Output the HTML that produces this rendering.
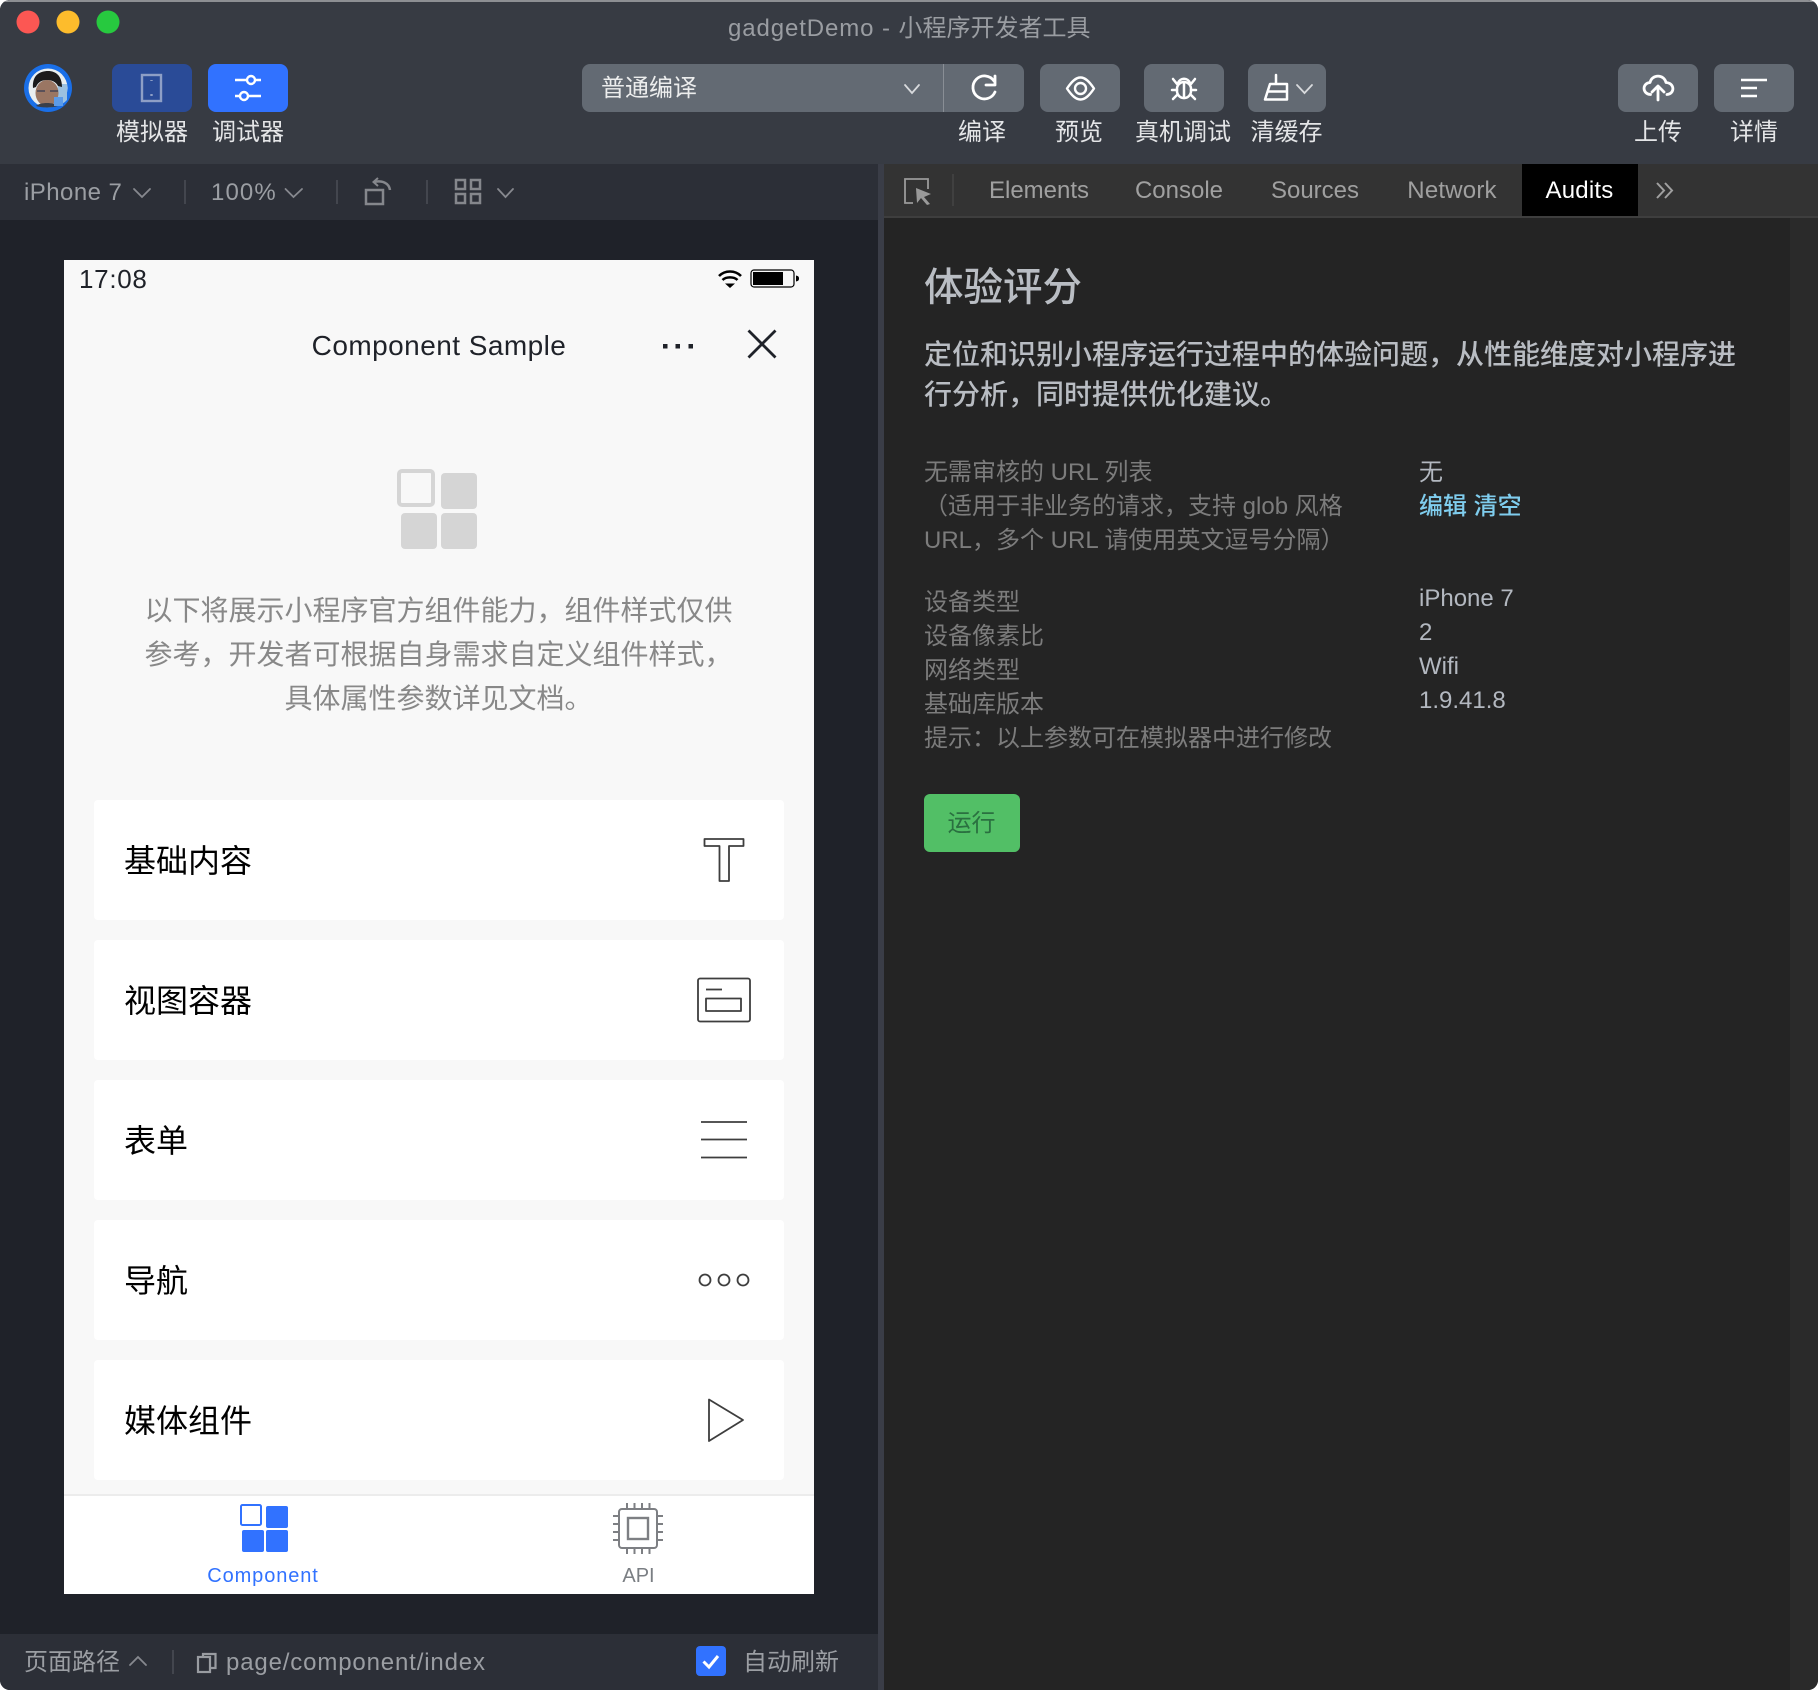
<!DOCTYPE html>
<html lang="zh"><head><meta charset="utf-8"><title>gadgetDemo</title>
<style>
*{box-sizing:border-box;margin:0;padding:0}
html,body{width:1818px;height:1690px;background:#fff;overflow:hidden}
body{font-family:"Liberation Sans","Noto Sans CJK SC",sans-serif}
#w{position:absolute;left:0;top:0;width:1818px;height:1690px;background:#242424;border-radius:10px;overflow:hidden}
.b{position:absolute}
.t{position:absolute;white-space:nowrap;line-height:34px;height:34px}
.c{transform:translateX(-50%)}
.btn{position:absolute;top:64px;height:48px;background:#636a73;border-radius:8px}
.l{font-size:24px;color:#e4e5e7}
.g{font-size:24px;color:#9b9ea3}
.k{font-size:24px;color:#7c7c7c}
.v{font-size:24px;color:#b3b8c0}
.tab{font-size:24px;color:#a0a0a0}
.card{position:absolute;left:94px;width:690px;height:120px;background:#fff;border-radius:4px}
.ct{position:absolute;left:124px;font-size:32px;color:#000;line-height:48px;white-space:nowrap}
svg{position:absolute;left:0;top:0}
</style></head><body><div id="w">
<div class="b" style="left:0;top:0;width:1818px;height:164px;background:#373b43"></div>
<div class="b" style="left:0;top:0;width:1818px;height:2px;background:#8d8f93"></div>
<div class="b" style="left:0;top:164px;width:878px;height:56px;background:#2c2f37"></div>
<div class="b" style="left:0;top:220px;width:878px;height:1414px;background:#1f2229"></div>
<div class="b" style="left:0;top:1634px;width:878px;height:56px;background:#2c2f37"></div>
<div class="b" style="left:878px;top:164px;width:6px;height:1526px;background:#3a3d47"></div>
<div class="b" style="left:884px;top:164px;width:934px;height:52px;background:#333"></div>
<div class="b" style="left:884px;top:216px;width:934px;height:2px;background:#3e3e3e"></div>
<div class="b" style="left:1790px;top:218px;width:28px;height:1472px;background:#2a2a2a"></div>
<div class="b" style="left:1522px;top:164px;width:116px;height:52px;background:#000"></div>

<div class="t" style="left:728px;top:12px;font-size:24px;color:#9a9da2"><span style="letter-spacing:.9px">gadgetDemo - </span>小程序开发者工具</div>

<div class="btn" style="left:112px;width:80px;background:#2a4b97"></div>
<div class="btn" style="left:208px;width:80px;background:#3172ff"></div>
<div class="btn" style="left:582px;width:442px"></div>
<div class="b" style="left:943px;top:64px;width:1px;height:48px;background:#898e95"></div>
<div class="btn" style="left:1040px;width:80px"></div>
<div class="btn" style="left:1144px;width:80px"></div>
<div class="btn" style="left:1248px;width:78px"></div>
<div class="btn" style="left:1618px;width:80px"></div>
<div class="btn" style="left:1714px;width:80px"></div>
<div class="t" style="left:601px;top:72px;font-size:24px;color:#eceded">普通编译</div>

<div class="t l c" style="left:152px;top:116px">模拟器</div>
<div class="t l c" style="left:248px;top:116px">调试器</div>
<div class="t l c" style="left:982px;top:116px">编译</div>
<div class="t l c" style="left:1079px;top:116px">预览</div>
<div class="t l c" style="left:1183px;top:116px">真机调试</div>
<div class="t l c" style="left:1286.500px;top:116px">清缓存</div>
<div class="t l c" style="left:1658px;top:116px">上传</div>
<div class="t l c" style="left:1754px;top:116px">详情</div>

<div class="t g" style="left:24px;top:176px;letter-spacing:.45px">iPhone 7</div>
<div class="t g" style="left:211px;top:176px;letter-spacing:1.1px">100%</div>

<div class="t tab c" style="left:1039px;top:174px">Elements</div>
<div class="t tab c" style="left:1179px;top:174px">Console</div>
<div class="t tab c" style="left:1315px;top:174px">Sources</div>
<div class="t tab c" style="left:1452px;top:174px;letter-spacing:.2px">Network</div>
<div class="t c" style="left:1579.500px;top:174px;font-size:24px;color:#fff;letter-spacing:.2px">Audits</div>

<!-- phone -->
<div class="b" style="left:64px;top:260px;width:750px;height:1334px;background:#f8f8f8"></div>
<div class="t" style="left:79px;top:262px;font-size:26px;color:#1f2229;letter-spacing:.7px">17:08</div>
<div class="t c" style="left:439px;top:328px;font-size:28px;color:#1f2229;line-height:36px;height:36px;letter-spacing:.45px">Component Sample</div>
<div class="t" style="left:144px;top:589px;width:589px;height:auto;font-size:28px;line-height:44px;color:#888;text-align:center;white-space:normal">以下将展示小程序官方组件能力，组件样式仅供参考，开发者可根据自身需求自定义组件样式，具体属性参数详见文档。</div>

<div class="card" style="top:800px"></div><div class="ct" style="top:837px">基础内容</div>
<div class="card" style="top:940px"></div><div class="ct" style="top:977px">视图容器</div>
<div class="card" style="top:1080px"></div><div class="ct" style="top:1117px">表单</div>
<div class="card" style="top:1220px"></div><div class="ct" style="top:1257px">导航</div>
<div class="card" style="top:1360px"></div><div class="ct" style="top:1397px">媒体组件</div>

<div class="b" style="left:64px;top:1494px;width:750px;height:100px;background:#fff;border-top:2px solid #ececec"></div>
<div class="t c" style="left:263px;top:1559px;font-size:20px;color:#3172ff;letter-spacing:.9px">Component</div>
<div class="t c" style="left:638.500px;top:1559px;font-size:20px;color:#7a7e83">API</div>

<!-- bottom -->
<div class="t g" style="left:24px;top:1646px">页面路径</div>
<div class="t g" style="left:226px;top:1646px;letter-spacing:.85px">page/component/index</div>
<div class="b" style="left:696px;top:1646px;width:30px;height:30px;background:#3172ff;border-radius:4px"></div>
<div class="t g" style="left:743px;top:1646px">自动刷新</div>

<!-- audits -->
<div class="t" style="left:924px;top:263px;height:50px;line-height:50px;font-size:39.500px;color:#b9bdc3;font-weight:500">体验评分</div>
<div class="t" style="left:924px;top:335px;width:830px;height:auto;white-space:normal;font-size:28px;line-height:40px;color:#b9bdc3;font-weight:500">定位和识别小程序运行过程中的体验问题，从性能维度对小程序进行分析，同时提供优化建议。</div>
<div class="t k" style="left:924px;top:456px">无需审核的 URL 列表</div>
<div class="t k" style="left:924px;top:490px">（适用于非业务的请求，支持 glob 风格</div>
<div class="t k" style="left:924px;top:524px">URL，多个 URL 请使用英文逗号分隔）</div>
<div class="t k" style="left:924px;top:586px">设备类型</div>
<div class="t k" style="left:924px;top:620px">设备像素比</div>
<div class="t k" style="left:924px;top:654px">网络类型</div>
<div class="t k" style="left:924px;top:688px">基础库版本</div>
<div class="t k" style="left:924px;top:722px">提示：以上参数可在模拟器中进行修改</div>
<div class="t v" style="left:1419px;top:456px">无</div>
<div class="t" style="left:1419px;top:490px;font-size:24px;color:#7fcdee;font-weight:500">编辑 清空</div>
<div class="t v" style="left:1419px;top:582px">iPhone 7</div>
<div class="t v" style="left:1419px;top:616px">2</div>
<div class="t v" style="left:1419px;top:650px">Wifi</div>
<div class="t v" style="left:1419px;top:684px">1.9.41.8</div>
<div class="b" style="left:924px;top:794px;width:96px;height:58px;background:#52bf66;border-radius:6px"></div>
<div class="t c" style="left:971.500px;top:807px;font-size:24px;color:#2a7040">运行</div>

<svg width="1818" height="1690" viewBox="0 0 1818 1690" fill="none">
<!-- traffic -->
<circle cx="28" cy="22" r="11.500" fill="#fc5753"/><circle cx="68" cy="22" r="11.500" fill="#fdbc2c"/><circle cx="108" cy="22" r="11.500" fill="#27c93f"/>
<!-- avatar -->
<circle cx="48" cy="88" r="24" fill="#1a6fe8"/><circle cx="48" cy="88" r="19.500" fill="#e9eef0"/>
<path d="M58 84H67V100A19 19 0 0 1 56 106Z" fill="#9cc1e0"/>
<ellipse cx="47" cy="93" rx="11.500" ry="13" fill="#9a7663"/>
<path d="M33 88C32 75 40 71 48 71C56 71 62 76 62 87L58 86C56 82 52 80 47 80C42 80 38 82 36 87Z" fill="#1c1b1c"/>
<path d="M37 91H45M50 91H58" stroke="#445" stroke-width="1.500"/>
<path d="M36 106C40 102 54 102 58 106C52 108 42 108 36 106Z" fill="#3a3f4a"/>
<rect x="54" y="97" width="9" height="9" fill="#5c9be8"/>
<!-- sim/dbg -->
<g stroke="#8e9fc6" stroke-width="2.400"><rect x="142" y="75" width="19" height="26" /><path d="M151.500 80v1M151.500 94v2"/></g>
<g stroke="#fff" stroke-width="2.400"><path d="M235 80H247M255 80H261M235 96H240M248 96H261"/><circle cx="251" cy="80" r="4"/><circle cx="244" cy="96" r="4"/></g>
<!-- chevrons -->
<g stroke="#d8dadd" stroke-width="1.800" stroke-linecap="round">
<path d="M905 85L912 93L919 85"/><path d="M1297 85L1304.500 93L1312 85"/></g>
<!-- refresh -->
<g stroke="#fff" stroke-width="2.800" stroke-linecap="round" stroke-linejoin="round"><path d="M995 92 A11.500 11.500 0 1 1 994 81"/><path d="M995 76V85H986"/>
<!-- eye -->
<path d="M1067 88.500C1072 81 1076 77.500 1080.500 77.500S1089 81 1094 88.500C1089 96 1085 99.500 1080.500 99.500S1072 96 1067 88.500Z" stroke-width="2.400"/><circle cx="1080.500" cy="88.500" r="5.500" stroke-width="2.400"/>
<!-- bug -->
<g stroke-width="2.500"><path d="M1178 83A6.500 7 0 0 1 1190 83"/><rect x="1177" y="82" width="14" height="16" rx="7"/><path d="M1184 82V98"/><path d="M1177 84L1173 79M1191 84L1195 79M1177 90H1172M1191 90H1196M1177 95L1173 99M1191 95L1195 99"/></g>
<!-- broom -->
<g stroke-width="2.500"><path d="M1276 75V84M1270 84H1287V99.500H1265L1270 84ZM1268 91.500H1287"/></g>
<!-- upload -->
<path d="M1650.500 94.500C1642 94 1642 83 1650 82.500C1652 74 1664 74 1666 82.500C1675 83 1675 94 1667 94.500" stroke-width="2.800"/><path d="M1658 100V87M1652 92L1658 86L1664 92" stroke-width="2.800"/>
<path d="M1741 80H1767M1741 88H1757M1741 96H1757" stroke-width="2.500" stroke-linecap="butt"/>
</g>
<!-- second bar -->
<g stroke="#87898f" stroke-width="1.800" stroke-linecap="round"><path d="M134 189L142 197L150 189"/><path d="M285.500 189L293.500 197L302 189"/><path d="M498 189L505.500 197L513 189"/><path d="M130 1665L138 1657L146 1665"/></g>
<path d="M185 180V204M337 180V204M427 180V204M173 1650V1674" stroke="#4b4e56" stroke-width="1.500"/>
<g stroke="#85878c" stroke-width="2.500"><rect x="366" y="190" width="17" height="14"/><path d="M374 182C382 180 389 183 390 190"/><path d="M378 178L373.500 182L378 186" stroke-width="2"/>
<rect x="456" y="180" width="9" height="9"/><rect x="471" y="180" width="9" height="9"/><rect x="456" y="194" width="9" height="9"/><rect x="471" y="194" width="9" height="9"/></g>
<!-- tabs -->
<g stroke="#9a9a9a" stroke-width="1.800" fill="none"><path d="M913 203H905V179H928V189"/></g>
<path d="M916 188L931 194L924 197L930 204L927 205L921 198L917 203Z" fill="#9a9a9a"/>
<path d="M953 174V206" stroke="#444" stroke-width="1.500"/>
<path d="M1657 183L1664 190.500L1657 198M1665 183L1672 190.500L1665 198" stroke="#a0a0a0" stroke-width="2"/>
<!-- wifi + battery -->
<path d="M719 276C725 270 735 270 741 276M722.500 280C726 276.500 734 276.500 737.500 280" stroke="#000" stroke-width="2.600"/><path d="M725 283.500H735L730 288Z" fill="#000"/>
<rect x="751" y="270" width="43" height="17" rx="3" stroke="#000" stroke-width="1.200"/><rect x="753" y="272" width="30" height="13" fill="#000"/><path d="M796 275.500C798.500 276 799 277 799 278.500S798.500 281 796 281.500Z" fill="#000"/>
<path d="M748.500 330.500L775.500 357.500M775.500 330.500L748.500 357.500" stroke="#1f2229" stroke-width="2.800"/>
<g fill="#1f2229"><rect x="663" y="344" width="4.500" height="4.500"/><rect x="675.500" y="344" width="4.500" height="4.500"/><rect x="688.500" y="344" width="4.500" height="4.500"/></g>
<!-- logo -->
<rect x="399" y="471" width="34" height="34" rx="3" stroke="#d5d5d5" stroke-width="4"/>
<g fill="#d5d5d5"><rect x="441" y="473" width="36" height="36" rx="4"/><rect x="401" y="513" width="36" height="36" rx="4"/><rect x="441" y="513" width="36" height="36" rx="4"/></g>
<!-- card icons -->
<g stroke="#3e3e3e" stroke-width="1.800" stroke-linejoin="round">
<path d="M704.500 839H743.500V846H729V881H719.500V846H704.500Z"/>
<rect x="698" y="978.500" width="52" height="43" rx="2"/><rect x="706" y="998.500" width="35" height="12.500"/><path d="M706 989.500H722"/>
<path d="M701 1122H747M701 1139.500H747M701 1157.500H747"/>
<circle cx="705" cy="1280" r="5.500"/><circle cx="724" cy="1280" r="5.500"/><circle cx="743" cy="1280" r="5.500"/>
<path d="M709 1399.500L743 1420L709 1441Z" stroke-width="1.800"/>
</g>
<!-- tabbar icons -->
<rect x="241" y="1505" width="20" height="20" rx="1.500" stroke="#3172ff" stroke-width="2"/>
<g fill="#3172ff"><rect x="266" y="1506" width="22" height="22" rx="2"/><rect x="242" y="1530" width="22" height="22" rx="2"/><rect x="266" y="1530" width="22" height="22" rx="2"/></g>
<g stroke="#7d7f83" stroke-width="2"><rect x="619" y="1509" width="38" height="39" rx="3"/><rect x="628" y="1518" width="20" height="21" stroke-width="2.400"/>
<path d="M627 1503V1509M634.500 1503V1509M642 1503V1509M649.500 1503V1509M627 1548V1554M634.500 1548V1554M642 1548V1554M649.500 1548V1554M613 1516H619M613 1524H619M613 1532H619M613 1540H619M657 1516H663M657 1524H663M657 1532H663M657 1540H663"/></g>
<!-- bottom icons -->
<g stroke="#999ca1" stroke-width="2.200"><rect x="198" y="1657" width="12" height="15"/><path d="M203 1657V1654H215.500V1668H210"/></g>
<path d="M703.500 1661.500L709 1667L718 1656" stroke="#fff" stroke-width="3"/>
</svg>
</div></body></html>
